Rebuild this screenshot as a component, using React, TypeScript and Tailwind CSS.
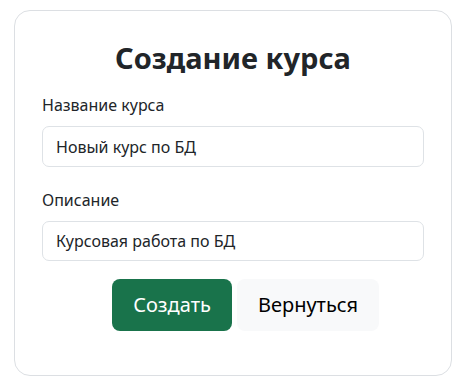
import React from "react";

export default function App() {
  return (
    <div
      className="w-[463px] h-[380px] bg-white pl-[14px] pr-[11px] pt-[10px] text-[#212529]"
      style={{ fontFamily: '"Noto Sans", "Open Sans", sans-serif' }}
    >
      <div className="border border-[#dcdfe3] rounded-2xl px-[27px] pt-[27px] pb-[44px]">
        <h1 className="text-[29px] leading-[40px] font-bold text-center">Создание курса</h1>

        <form className="mt-[15px]">
          <label className="block text-base leading-6">Название курса</label>
          <input
            className="mt-[9px] block w-full h-[41px] border border-[#dee2e6] rounded-[7px] pl-[13px] text-base outline-none"
            defaultValue="Новый курс по БД"
          />

          <label className="block mt-[21px] text-base leading-6">Описание</label>
          <input
            className="mt-[9px] block w-full h-[40px] border border-[#dee2e6] rounded-[7px] pl-[13px] text-base outline-none"
            defaultValue="Курсовая работа по БД"
          />

          <div className="mt-[18px] flex justify-center gap-[5px] pl-[25px]">
            <button
              type="button"
              className="h-[52px] w-[120px] rounded-lg bg-[#19734b] text-white text-[20px]"
            >
              Создать
            </button>
            <button
              type="button"
              className="h-[52px] w-[142px] rounded-lg bg-[#f8f9fa] text-black text-[20px]"
            >
              Вернуться
            </button>
          </div>
        </form>
      </div>
    </div>
  );
}
